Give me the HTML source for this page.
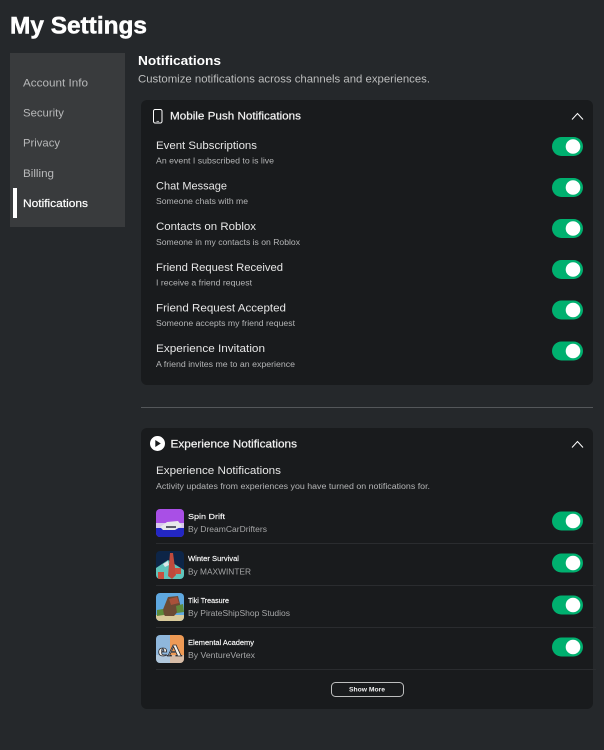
<!DOCTYPE html>
<html lang="en">
<head>
<meta charset="utf-8">
<title>My Settings</title>
<style>
html,body{margin:0;padding:0;background:#25282b;width:604px;height:750px;overflow:hidden}
svg{display:block}
text{font-family:"Liberation Sans",sans-serif}
.side{font-size:11px;fill:#b8b9ba}
.t{font-size:11px;fill:#e6e6e6}
.s{font-size:8px;fill:#b4b5b6}
.g{font-size:7.5px;fill:#fff;stroke:#fff;stroke-width:.15px}
.b{font-size:8px;fill:#a5a6a7}
.h{font-size:11px;fill:#f4f4f4;stroke:#f4f4f4;stroke-width:.2px}
</style>
</head>
<body>
<svg width="604" height="750" viewBox="0 0 604 750" xmlns="http://www.w3.org/2000/svg">
<defs>
<g id="tg"><rect x="0" y="0" width="31" height="19" rx="9.5" fill="#00b06f"/><circle cx="21" cy="9.5" r="7.3" fill="#fff"/></g>
<clipPath id="c1"><rect x="156" y="509" width="28" height="28" rx="4"/></clipPath>
<clipPath id="c2"><rect x="156" y="551" width="28" height="28" rx="4"/></clipPath>
<clipPath id="c3"><rect x="156" y="593" width="28" height="28" rx="4"/></clipPath>
<clipPath id="c4"><rect x="156" y="635" width="28" height="28" rx="4"/></clipPath>
</defs>
<rect width="604" height="750" fill="#25282b"/>
<text x="10" y="33.5" font-size="24" font-weight="bold" fill="#fff" stroke="#fff" stroke-width=".5" textLength="137" lengthAdjust="spacingAndGlyphs">My Settings</text>

<rect x="10" y="53" width="115" height="174" fill="#393b3d"/>
<rect x="13" y="188" width="4" height="30" fill="#fff"/>
<text class="side" x="23" y="86.5" textLength="65" lengthAdjust="spacingAndGlyphs">Account Info</text>
<text class="side" x="23" y="116.5" textLength="41" lengthAdjust="spacingAndGlyphs">Security</text>
<text class="side" x="23" y="146.5" textLength="37" lengthAdjust="spacingAndGlyphs">Privacy</text>
<text class="side" x="23" y="177" textLength="31" lengthAdjust="spacingAndGlyphs">Billing</text>
<text class="side" x="23" y="207" textLength="65" lengthAdjust="spacingAndGlyphs" style="fill:#fff;stroke:#fff;stroke-width:.2px">Notifications</text>

<text x="138" y="65" font-size="13" font-weight="bold" fill="#fff" textLength="83" lengthAdjust="spacingAndGlyphs">Notifications</text>
<text x="138" y="82.5" font-size="11" fill="#bdbebe" textLength="292" lengthAdjust="spacingAndGlyphs">Customize notifications across channels and experiences.</text>

<rect x="141" y="100" width="452" height="285" rx="6" fill="#191b1d"/>
<rect x="153.5" y="109.5" width="8.5" height="13.5" rx="1.6" fill="none" stroke="#fff" stroke-width="1"/>
<path d="M156.5 121.3h2.5" stroke="#fff" stroke-width=".7"/>
<text class="h" x="170" y="119.5" textLength="131" lengthAdjust="spacingAndGlyphs">Mobile Push Notifications</text>
<path d="M572 119.5 L577.5 113.5 L583 119.5" fill="none" stroke="#fff" stroke-width="1"/>

<text class="t" x="156" y="149" textLength="101" lengthAdjust="spacingAndGlyphs">Event Subscriptions</text>
<text class="s" x="156" y="163.5" textLength="118" lengthAdjust="spacingAndGlyphs">An event I subscribed to is live</text>
<use href="#tg" x="552" y="137"/>
<text class="t" x="156" y="189.5" textLength="71" lengthAdjust="spacingAndGlyphs">Chat Message</text>
<text class="s" x="156" y="204" textLength="92" lengthAdjust="spacingAndGlyphs">Someone chats with me</text>
<use href="#tg" x="552" y="178"/>
<text class="t" x="156" y="230" textLength="100" lengthAdjust="spacingAndGlyphs">Contacts on Roblox</text>
<text class="s" x="156" y="245" textLength="144" lengthAdjust="spacingAndGlyphs">Someone in my contacts is on Roblox</text>
<use href="#tg" x="552" y="219"/>
<text class="t" x="156" y="271" textLength="127" lengthAdjust="spacingAndGlyphs">Friend Request Received</text>
<text class="s" x="156" y="285.5" textLength="96" lengthAdjust="spacingAndGlyphs">I receive a friend request</text>
<use href="#tg" x="552" y="260"/>
<text class="t" x="156" y="311.5" textLength="130" lengthAdjust="spacingAndGlyphs">Friend Request Accepted</text>
<text class="s" x="156" y="326" textLength="139" lengthAdjust="spacingAndGlyphs">Someone accepts my friend request</text>
<use href="#tg" x="552" y="300.5"/>
<text class="t" x="156" y="352" textLength="109" lengthAdjust="spacingAndGlyphs">Experience Invitation</text>
<text class="s" x="156" y="367" textLength="139" lengthAdjust="spacingAndGlyphs">A friend invites me to an experience</text>
<use href="#tg" x="552" y="341.5"/>

<rect x="141" y="407" width="452" height="1" fill="#54575a"/>

<rect x="141" y="428" width="452" height="281" rx="6" fill="#191b1d"/>
<circle cx="157.5" cy="443.5" r="7.5" fill="#fff"/>
<path d="M155.3 440 L155.3 447 L160.8 443.5 Z" fill="#191b1d"/>
<text class="h" x="170.5" y="447.5" textLength="126.5" lengthAdjust="spacingAndGlyphs">Experience Notifications</text>
<path d="M572 447.5 L577.5 441.5 L583 447.5" fill="none" stroke="#fff" stroke-width="1"/>
<text class="t" x="156" y="474" textLength="125" lengthAdjust="spacingAndGlyphs">Experience Notifications</text>
<text class="s" x="156" y="489" textLength="274" lengthAdjust="spacingAndGlyphs">Activity updates from experiences you have turned on notifications for.</text>

<g clip-path="url(#c1)">
<rect x="156" y="509" width="28" height="28" fill="#a94fe6"/>
<rect x="156" y="523" width="28" height="5" fill="#d9c7ee"/>
<rect x="156" y="528" width="28" height="9" fill="#2327c4"/>
<path d="M160 527 L167 522 L178 521 L182 526 L175 530 L163 530 Z" fill="#e6e6ea"/>
<path d="M166 526h10v2h-10z" fill="#5a5a6a"/>
</g>
<text class="g" x="188" y="519" textLength="37" lengthAdjust="spacingAndGlyphs">Spin Drift</text>
<text class="b" x="188" y="532" textLength="79" lengthAdjust="spacingAndGlyphs">By DreamCarDrifters</text>
<use href="#tg" x="552" y="511.5"/>
<rect x="156" y="543" width="440" height="1" fill="#2a2c2f"/>

<g clip-path="url(#c2)">
<rect x="156" y="551" width="28" height="28" fill="#0d2547"/>
<path d="M156 568 L168 560 L184 570 L184 579 L156 579 Z" fill="#5fc4bb"/>
<path d="M170 553 L173 553 L176 575 L172 579 L168 576 Z" fill="#bf4a3c"/>
<path d="M158 572h6v7h-6zM175 568h6v6h-6z" fill="#c8503e"/>
<path d="M163 564l5-3 1 4-4 2z" fill="#dce8ea"/>
</g>
<text class="g" x="188" y="561" textLength="51" lengthAdjust="spacingAndGlyphs">Winter Survival</text>
<text class="b" x="188" y="574.5" textLength="63" lengthAdjust="spacingAndGlyphs">By MAXWINTER</text>
<use href="#tg" x="552" y="553.5"/>
<rect x="156" y="585" width="440" height="1" fill="#2a2c2f"/>

<g clip-path="url(#c3)">
<rect x="156" y="593" width="28" height="28" fill="#5fa8e0"/>
<rect x="156" y="615" width="28" height="6" fill="#d8c99a"/>
<path d="M162 612 L168 597 L178 596 L181 608 L174 616 L165 616 Z" fill="#6b4a34"/>
<path d="M169 599l8-2 2 6-8 2z" fill="#a8513a"/>
<path d="M176 606l7-2 1 8-7 1zM157 610l6-1 1 6-7 1z" fill="#5d8a3a"/>
</g>
<text class="g" x="188" y="603" textLength="41" lengthAdjust="spacingAndGlyphs">Tiki Treasure</text>
<text class="b" x="188" y="616" textLength="102" lengthAdjust="spacingAndGlyphs">By PirateShipShop Studios</text>
<use href="#tg" x="552" y="595.5"/>
<rect x="156" y="627" width="440" height="1" fill="#2a2c2f"/>

<g clip-path="url(#c4)">
<rect x="156" y="635" width="14" height="28" fill="#8fb7dc"/>
<rect x="170" y="635" width="14" height="28" fill="#ee9a55"/>
<rect x="156" y="655" width="28" height="8" fill="#c8d3dd" opacity=".6"/>
<text x="158" y="656" font-size="17" font-weight="bold" fill="#f4f1ea" stroke="#2a2a30" stroke-width=".7" textLength="24" lengthAdjust="spacingAndGlyphs" style="font-family:'Liberation Serif',serif">eA</text>
</g>
<text class="g" x="188" y="645" textLength="66" lengthAdjust="spacingAndGlyphs">Elemental Academy</text>
<text class="b" x="188" y="658" textLength="67" lengthAdjust="spacingAndGlyphs">By VentureVertex</text>
<use href="#tg" x="552" y="637.5"/>
<rect x="156" y="669" width="440" height="1" fill="#2a2c2f"/>

<rect x="331.5" y="682.5" width="72" height="14" rx="4" fill="none" stroke="#bdbebe" stroke-width="1"/>
<text x="349" y="691.5" font-size="6.5" font-weight="bold" fill="#f0f0f0" textLength="36" lengthAdjust="spacingAndGlyphs">Show More</text>
</svg>
</body>
</html>
